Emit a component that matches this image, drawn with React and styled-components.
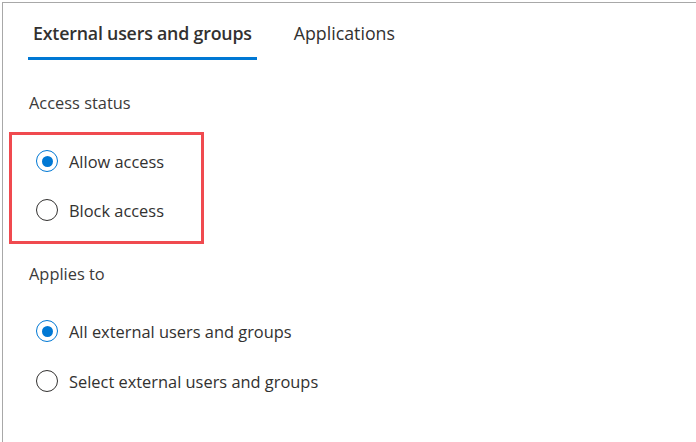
import React from 'react';
import styled, { createGlobalStyle } from 'styled-components';

const GlobalStyle = createGlobalStyle`
  html, body {
    margin: 0;
    padding: 0;
    background: #ffffff;
  }
  body {
    font-family: 'Open Sans', 'Noto Sans', 'Liberation Sans', sans-serif;
    color: #323130;
  }
`;

const Panel = styled.div`
  margin: 2px 0 0 2px;
  height: 440px;
  border-top: 1px solid #a8a8a8;
  border-left: 1px solid #a8a8a8;
  box-sizing: border-box;
`;

const TabBar = styled.div`
  display: flex;
  gap: 32px;
  padding-left: 25px;
`;

const Tab = styled.div`
  height: 57px;
  box-sizing: border-box;
  padding: 5px 5px 0;
  display: flex;
  align-items: center;
  font-size: 17.8px;
  font-weight: ${(p) => (p.$active ? 600 : 400)};
  letter-spacing: ${(p) => (p.$active ? '-0.2px' : '0')};
  color: #323130;
  border-bottom: 3px solid ${(p) => (p.$active ? '#0078d4' : 'transparent')};
`;

const SectionLabel = styled.div`
  margin: ${(p) => p.$top}px 0 0 26px;
  font-size: 16.4px;
  line-height: 20px;
  color: #3b3a39;
`;

const Highlight = styled.div`
  margin: 19px 0 0 6px;
  width: 195px;
  box-sizing: border-box;
  border: 3px solid #f04a4f;
  padding: 14px 0 19px 24px;
  display: flex;
  flex-direction: column;
  gap: 25px;
`;

const Options = styled.div`
  margin-top: 35px;
  padding-left: 33px;
  display: flex;
  flex-direction: column;
  gap: 26px;
`;

const Row = styled.label`
  display: flex;
  align-items: center;
  gap: 11px;
  height: 24px;
  font-size: 16.4px;
  color: #323130;
  white-space: nowrap;
`;

const Circle = styled.span`
  width: 22px;
  height: 22px;
  box-sizing: border-box;
  border-radius: 50%;
  border: 1.5px solid ${(p) => (p.$checked ? '#0078d4' : '#323130')};
  display: flex;
  align-items: center;
  justify-content: center;
  flex-shrink: 0;
  &::after {
    content: '';
    display: ${(p) => (p.$checked ? 'block' : 'none')};
    width: 11px;
    height: 11px;
    border-radius: 50%;
    background: #0078d4;
  }
`;

const Radio = ({ checked, children }) => (
  <Row>
    <Circle $checked={checked} />
    {children}
  </Row>
);

export default function App() {
  return (
    <>
      <GlobalStyle />
      <Panel>
        <TabBar>
          <Tab $active>External users and groups</Tab>
          <Tab>Applications</Tab>
        </TabBar>
        <SectionLabel $top={33}>Access status</SectionLabel>
        <Highlight>
          <Radio checked>Allow access</Radio>
          <Radio>Block access</Radio>
        </Highlight>
        <SectionLabel $top={20}>Applies to</SectionLabel>
        <Options>
          <Radio checked>All external users and groups</Radio>
          <Radio>Select external users and groups</Radio>
        </Options>
      </Panel>
    </>
  );
}
